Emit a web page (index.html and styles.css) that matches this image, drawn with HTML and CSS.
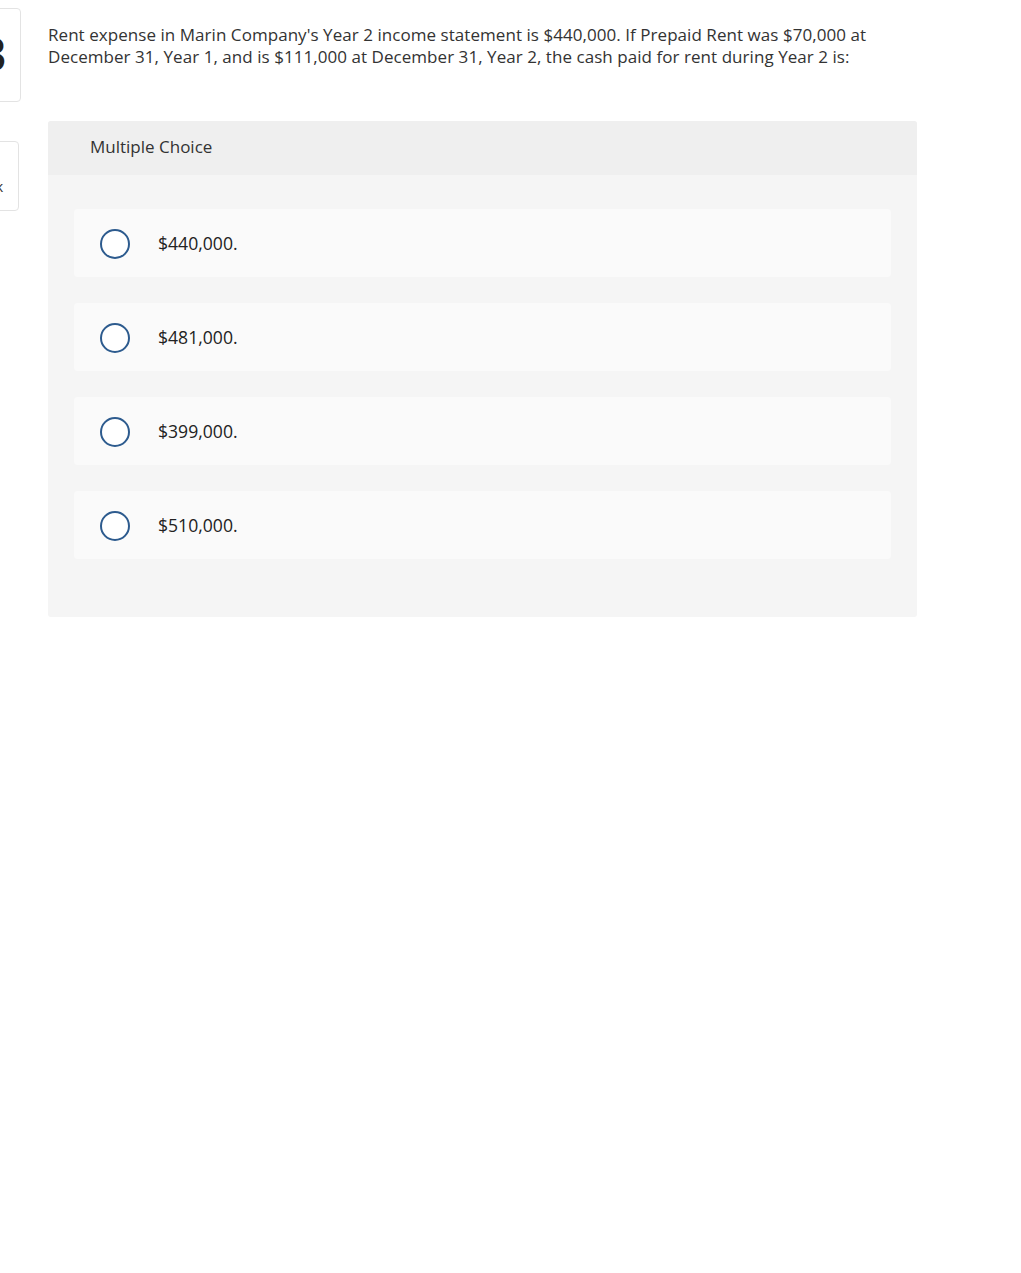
FILE: index.html
```html
<!DOCTYPE html>
<html lang="en">
  <head>
    <meta charset="UTF-8" />
    <meta name="viewport" content="width=device-width, initial-scale=1.0" />
    <title>Multiple Choice</title>
    <link rel="stylesheet" href="styles.css">
  </head>
  <body>
    <div class="page">
      <div class="side">
        <div class="side-card number-card"><span class="number">3</span></div>
        <div class="side-card check-card"><span class="label">Check</span></div>
      </div>

      <div class="main">
        <p class="question">
          Rent expense in Marin Company's Year 2 income statement is $440,000. If Prepaid Rent was $70,000 at
          December 31, Year 1, and is $111,000 at December 31, Year 2, the cash paid for rent during Year 2 is:
        </p>

        <div class="choices">
          <div class="choices-header">Multiple Choice</div>
          <div class="choices-body">
            <label class="choice">
              <span class="radio"></span>
              <span class="choice-text">$440,000.</span>
            </label>
            <label class="choice">
              <span class="radio"></span>
              <span class="choice-text">$481,000.</span>
            </label>
            <label class="choice">
              <span class="radio"></span>
              <span class="choice-text">$399,000.</span>
            </label>
            <label class="choice">
              <span class="radio"></span>
              <span class="choice-text">$510,000.</span>
            </label>
          </div>
        </div>
      </div>
    </div>
  </body>
</html>
```

FILE: styles.css
```css
  body {
    margin: 0;
    background: white;
    font-family: "Open Sans", Arial, sans-serif;
    color: #333;
  }

  .page {
    display: flex;
    align-items: flex-start;
  }

  .side {
    width: 21px;
    flex-shrink: 0;
    overflow: hidden;
    padding-top: 8px;
  }

  .side-card {
    box-sizing: border-box;
    width: 80px;
    margin-left: -59px;
    border: 1px solid #e3e3e3;
    border-radius: 4px;
    background: white;
    display: flex;
    align-items: center;
    justify-content: flex-end;
  }

  .number-card {
    height: 94px;
  }

  .number {
    font-family: "Liberation Sans", Arial, sans-serif;
    font-weight: bold;
    font-size: 48px;
    color: #222;
    margin-right: 14px;
    margin-top: -2px;
  }

  .check-card {
    height: 70px;
    width: 78px;
    margin-top: 39px;
    align-items: flex-end;
    padding-bottom: 14px;
  }

  .check-card .label {
    font-size: 14px;
    color: #333;
    margin-right: 15px;
  }

  .main {
    margin-left: 27px;
    width: 869px;
    padding-top: 24px;
  }

  .question {
    margin: 0;
    max-width: 845px;
    font-size: 17px;
    line-height: 22px;
    color: #333;
    letter-spacing: 0.05px;
  }

  .choices {
    margin-top: 53px;
    border-radius: 3px;
    overflow: hidden;
    background: #f5f5f5;
  }

  .choices-header {
    height: 54px;
    background: #efefef;
    padding-left: 42px;
    padding-bottom: 3px;
    box-sizing: border-box;
    display: flex;
    align-items: center;
    font-size: 17px;
    color: #333;
  }

  .choices-body {
    display: flex;
    flex-direction: column;
    gap: 26px;
    padding: 34px 26px 58px 26px;
  }

  .choice {
    height: 68px;
    background: #fafafa;
    border-radius: 4px;
    display: flex;
    align-items: center;
    padding-left: 26px;
    cursor: pointer;
  }

  .radio {
    box-sizing: border-box;
    width: 30px;
    height: 30px;
    border: 2px solid #2d5b8e;
    border-radius: 50%;
    background: white;
    margin-top: 2px;
  }

  .choice-text {
    margin-left: 28px;
    font-size: 17.6px;
    color: #222;
    letter-spacing: 0;
  }
```
